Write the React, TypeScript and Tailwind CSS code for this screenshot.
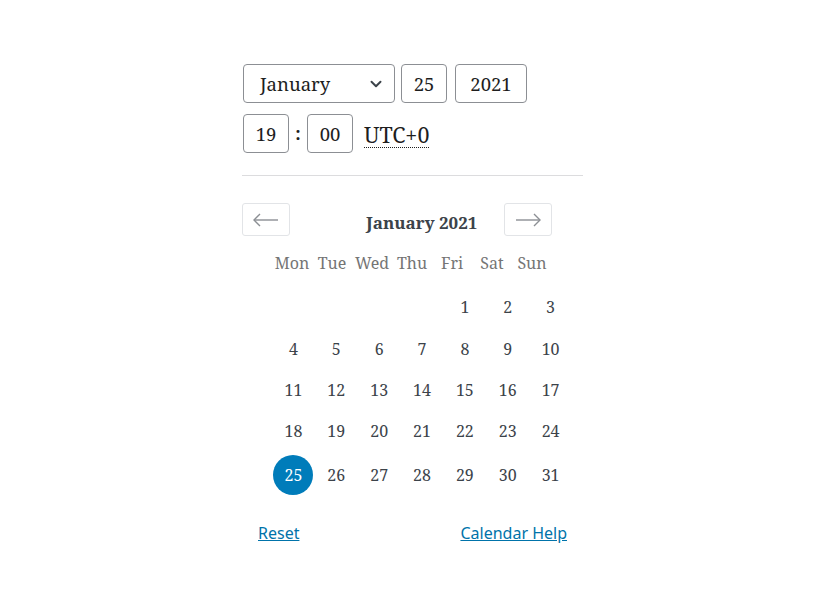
import { ChevronDown } from 'lucide-react';

const serif = { fontFamily: '"Noto Serif", "DejaVu Serif", "Liberation Serif", serif' };

const weekdays = ['Mon', 'Tue', 'Wed', 'Thu', 'Fri', 'Sat', 'Sun'];

// January 2021 starts on a Friday
const weeks: (number | null)[][] = [
  [null, null, null, null, 1, 2, 3],
  [4, 5, 6, 7, 8, 9, 10],
  [11, 12, 13, 14, 15, 16, 17],
  [18, 19, 20, 21, 22, 23, 24],
  [25, 26, 27, 28, 29, 30, 31],
];

const rowHeights = ['h-[42px]', 'h-[41px]', 'h-[41px]', 'h-[41px]', 'h-[47px]'];

function Arrow({ dir }: { dir: 'left' | 'right' }) {
  return (
    <svg width="26" height="14" viewBox="0 0 26 14" fill="none" stroke="#8c8f94" strokeWidth="1.4">
      {dir === 'left' ? (
        <>
          <path d="M1 7h24" />
          <path d="M7 1L1 7l6 6" />
        </>
      ) : (
        <>
          <path d="M1 7h24" />
          <path d="M19 1l6 6-6 6" />
        </>
      )}
    </svg>
  );
}

export default function App() {
  const selected = 25;

  return (
    <div className="min-h-screen bg-white" style={serif}>
      <div className="ml-[242px] w-[341px] pt-[64px] text-[#1e1e1e]">
        {/* Date fields */}
        <div className="flex items-center gap-[6px] pl-px">
          <div className="relative flex h-[39px] w-[152px] items-center rounded-[4px] border border-[#8c8f94] pl-[16px] text-[18.5px]">
            January
            <ChevronDown className="absolute right-[9px] h-[18px] w-[18px] text-[#3c434a]" strokeWidth={2.6} />
          </div>
          <div className="flex h-[39px] w-[46px] items-center justify-center rounded-[4px] border border-[#8c8f94] text-[18.5px]">
            25
          </div>
          <div className="ml-[2px] flex h-[39px] w-[72px] items-center justify-center rounded-[4px] border border-[#8c8f94] text-[18.5px]">
            2021
          </div>
        </div>

        {/* Time fields */}
        <div className="mt-[11px] flex items-center pl-px">
          <div className="flex h-[39px] w-[46px] items-center justify-center rounded-[4px] border border-[#8c8f94] text-[18.5px]">
            19
          </div>
          <span className="w-[18px] text-center text-[18px] font-bold">:</span>
          <div className="flex h-[39px] w-[46px] items-center justify-center rounded-[4px] border border-[#8c8f94] text-[18.5px]">
            00
          </div>
          <span className="ml-[11px] mt-[3px] border-b border-dotted border-[#1e1e1e] text-[21.5px] leading-[25px]">UTC+0</span>
        </div>

        <div className="mt-[22px] h-px bg-[#dcdcde]" />

        {/* Month navigation */}
        <div className="mt-[27px] flex items-center">
          <button className="flex h-[33px] w-[48px] items-center justify-center rounded-[3px] border border-[#e2e4e7] bg-white">
            <Arrow dir="left" />
          </button>
          <div className="ml-[76px] mt-[6px] w-[138px] text-[17px] font-bold text-[#3c434a]">January 2021</div>
          <button className="flex h-[33px] w-[48px] items-center justify-center rounded-[3px] border border-[#e2e4e7] bg-white">
            <Arrow dir="right" />
          </button>
        </div>

        {/* Weekday header */}
        <ul className="ml-[30px] mt-[15px] grid w-[280px] grid-cols-7 text-[16px] text-[#757575]">
          {weekdays.map((d) => (
            <li key={d} className="text-center">
              {d}
            </li>
          ))}
        </ul>

        {/* Days */}
        <div className="ml-[30px] mt-[11px] w-[300px]">
          {weeks.map((week, i) => (
            <div key={i} className={`grid grid-cols-7 ${rowHeights[i]}`}>
              {week.map((day, j) => (
                <div key={j} className="flex items-center justify-center text-[16px] text-[#3c434a]">
                  {day === selected ? (
                    <span className="flex h-[40px] w-[40px] items-center justify-center rounded-full bg-[#007cba] text-white">
                      {day}
                    </span>
                  ) : (
                    day
                  )}
                </div>
              ))}
            </div>
          ))}
        </div>

        {/* Footer links */}
        <div
          className="mt-[23px] flex justify-between pl-[16px] pr-[16px] text-[16px] text-[#0073aa]"
          style={{ fontFamily: '"Noto Sans", "Open Sans", sans-serif' }}
        >
          <a href="#" className="underline">Reset</a>
          <a href="#" className="underline">Calendar Help</a>
        </div>
      </div>
    </div>
  );
}
